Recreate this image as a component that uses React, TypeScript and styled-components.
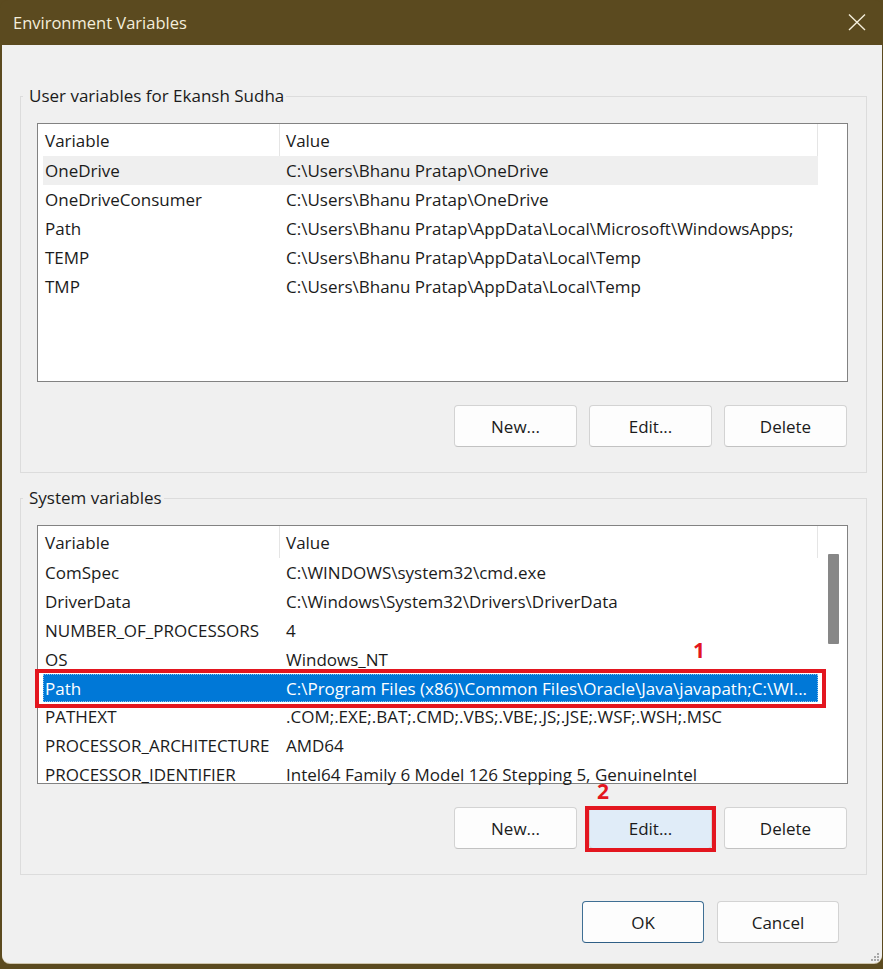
import React from "react";
import styled, { createGlobalStyle } from "styled-components";

const GlobalStyle = createGlobalStyle`
  html, body {
    margin: 0;
    padding: 0;
    background: #5b4a1f;
  }
  body {
    font-family: "Open Sans", "Noto Sans", "Liberation Sans", sans-serif;
    font-size: 17px;
    color: #1b1b1b;
  }
  * { box-sizing: border-box; }
`;

const Window = styled.div`
  width: 883px;
  height: 969px;
  display: flex;
  flex-direction: column;
  background: #5b4a1f;
  border-radius: 8px 8px 0 0;
  overflow: hidden;
`;

const TitleBar = styled.div`
  height: 45px;
  flex: none;
  display: flex;
  align-items: center;
  justify-content: space-between;
  padding: 0 16px 0 13px;
  color: #f4eedb;
  font-size: 16.5px;
`;

const CloseButton = styled.button`
  border: 0;
  background: transparent;
  padding: 0;
  width: 20px;
  height: 20px;
  display: flex;
  align-items: center;
  justify-content: center;
  color: #f4eedb;
`;

const Body = styled.div`
  position: relative;
  flex: 1;
  margin: 0 1px 6px 2px;
  background: #f0f0f0;
  border-radius: 0 0 8px 8px;
  box-shadow: 0 1px 0 #cfc6ae;
  padding: 40px 15px 0 18px;
  display: flex;
  flex-direction: column;
`;

const Group = styled.fieldset<{ $gap?: number }>`
  margin: ${(p) => p.$gap ?? 0}px 0 0 0;
  padding: 0;
  border: 1px solid #dcdcdc;
  min-width: 0;
`;

const Legend = styled.legend`
  margin-left: 2px;
  padding: 0 2px 0 6px;
  line-height: 22px;
  font-size: 17px;
  color: #1b1b1b;
`;

const GroupInner = styled.div`
  padding: 16px 18px 25px 16px;
  display: flex;
  flex-direction: column;
`;

const ListBox = styled.div`
  height: 259px;
  border: 1px solid #828282;
  background: #fff;
  display: flex;
`;

const ListMain = styled.div`
  flex: 1;
  display: flex;
  flex-direction: column;
  min-width: 0;
`;

const HeaderRow = styled.div`
  height: 32px;
  flex: none;
  display: flex;
  padding-left: 5px;
`;

const HeaderCell = styled.div<{ $w: number; $pad: number }>`
  width: ${(p) => p.$w}px;
  flex: none;
  padding-left: ${(p) => p.$pad}px;
  display: flex;
  align-items: center;
  border-right: 1px solid #e5e5e5;
  background: #fff;
`;

const Rows = styled.div`
  flex: 1;
  clip-path: inset(0 -20px 0 -20px);
`;

const Row = styled.div<{ $state?: "hover" | "selected" }>`
  position: relative;
  height: 28.9px;
  margin-left: 5px;
  width: 775px;
  display: flex;
  align-items: center;
  white-space: nowrap;
  background: ${(p) =>
    p.$state === "selected" ? "#0078d7" : p.$state === "hover" ? "#efefef" : "transparent"};
  color: ${(p) => (p.$state === "selected" ? "#fff" : "#1b1b1b")};
  outline: ${(p) => (p.$state === "selected" ? "1px dotted rgba(255,255,255,0.55)" : "none")};
  outline-offset: -1px;
`;

const Cell = styled.div<{ $w: number; $pad: number }>`
  width: ${(p) => p.$w}px;
  flex: none;
  padding-left: ${(p) => p.$pad}px;
  overflow: hidden;
  white-space: nowrap;
`;

const Scrollbar = styled.div`
  width: 27px;
  flex: none;
  background: #fff;
  padding: 28px 0 0 8px;
`;

const Thumb = styled.div`
  width: 11px;
  height: 90px;
  background: #878787;
  border-radius: 1px;
`;

const RedFrame = styled.div<{ $t: number; $r: number; $b: number; $l: number }>`
  position: absolute;
  top: ${(p) => p.$t}px;
  right: ${(p) => p.$r}px;
  bottom: ${(p) => p.$b}px;
  left: ${(p) => p.$l}px;
  border: 4px solid #e3161f;
  pointer-events: none;
`;

const Marker = styled.span<{ $top: number; $left: number }>`
  position: absolute;
  top: ${(p) => p.$top}px;
  left: ${(p) => p.$left}px;
  color: #e3161f;
  font-family: "Open Sans", "Liberation Sans", sans-serif;
  font-weight: 700;
  font-size: 21px;
  line-height: 15px;
`;

const ButtonRow = styled.div<{ $top: number; $right?: number; $gap: number }>`
  display: flex;
  justify-content: flex-end;
  gap: ${(p) => p.$gap}px;
  margin-top: ${(p) => p.$top}px;
  padding-right: ${(p) => p.$right ?? 0}px;
`;

const Annotated = styled.span`
  position: relative;
  display: inline-flex;
`;

const Button = styled.button<{ $w?: number; $variant?: "default" | "active" | "primary" }>`
  width: ${(p) => p.$w ?? 123}px;
  height: 42px;
  border-radius: 4px;
  font-family: inherit;
  font-size: 17px;
  color: #1b1b1b;
  background: ${(p) => (p.$variant === "active" ? "#e0ecf8" : "#fdfdfd")};
  border: 1px solid ${(p) => (p.$variant === "primary" ? "#3f6f94" : "#d3d3d3")};
  border-bottom-color: ${(p) => (p.$variant === "primary" ? "#2f5f86" : "#c2c2c2")};
  padding: 0;
`;

const Grip = styled.svg`
  position: absolute;
  right: 2px;
  bottom: 1px;
`;

type Entry = [string, string];

const userVars: Entry[] = [
  ["OneDrive", "C:\\Users\\Bhanu Pratap\\OneDrive"],
  ["OneDriveConsumer", "C:\\Users\\Bhanu Pratap\\OneDrive"],
  ["Path", "C:\\Users\\Bhanu Pratap\\AppData\\Local\\Microsoft\\WindowsApps;"],
  ["TEMP", "C:\\Users\\Bhanu Pratap\\AppData\\Local\\Temp"],
  ["TMP", "C:\\Users\\Bhanu Pratap\\AppData\\Local\\Temp"],
];

const systemVars: Entry[] = [
  ["ComSpec", "C:\\WINDOWS\\system32\\cmd.exe"],
  ["DriverData", "C:\\Windows\\System32\\Drivers\\DriverData"],
  ["NUMBER_OF_PROCESSORS", "4"],
  ["OS", "Windows_NT"],
  ["Path", "C:\\Program Files (x86)\\Common Files\\Oracle\\Java\\javapath;C:\\WI..."],
  ["PATHEXT", ".COM;.EXE;.BAT;.CMD;.VBS;.VBE;.JS;.JSE;.WSF;.WSH;.MSC"],
  ["PROCESSOR_ARCHITECTURE", "AMD64"],
  ["PROCESSOR_IDENTIFIER", "Intel64 Family 6 Model 126 Stepping 5, GenuineIntel"],
];

function VarList({
  items,
  hover,
  selected,
  scroll,
}: {
  items: Entry[];
  hover?: number;
  selected?: number;
  scroll?: boolean;
}) {
  return (
    <ListBox>
      <ListMain>
        <HeaderRow>
          <HeaderCell $w={237} $pad={2}>Variable</HeaderCell>
          <HeaderCell $w={538} $pad={6}>Value</HeaderCell>
        </HeaderRow>
        <Rows>
          {items.map(([name, value], i) => (
            <Row
              key={name}
              $state={i === selected ? "selected" : i === hover ? "hover" : undefined}
            >
              <Cell $w={237} $pad={2}>{name}</Cell>
              <Cell $w={538} $pad={6}>{value}</Cell>
              {i === selected && (
                <>
                  <RedFrame $t={-5} $r={-8} $b={-6} $l={-8} />
                  <Marker $top={-31} $left={650}>1</Marker>
                </>
              )}
            </Row>
          ))}
        </Rows>
      </ListMain>
      {scroll && (
        <Scrollbar>
          <Thumb />
        </Scrollbar>
      )}
    </ListBox>
  );
}

export default function App() {
  return (
    <>
      <GlobalStyle />
      <Window>
        <TitleBar>
          <span>Environment Variables</span>
          <CloseButton aria-label="Close">
            <svg width="18" height="17" viewBox="0 0 18 17">
              <path d="M1 0.5 L17 16 M17 0.5 L1 16" stroke="#f4eedb" strokeWidth="1.4" fill="none" />
            </svg>
          </CloseButton>
        </TitleBar>
        <Body>
          <Group>
            <Legend>User variables for Ekansh Sudha</Legend>
            <GroupInner>
              <VarList items={userVars} hover={0} />
              <ButtonRow $top={23} $gap={12} $right={1}>
                <Button>New...</Button>
                <Button>Edit...</Button>
                <Button>Delete</Button>
              </ButtonRow>
            </GroupInner>
          </Group>

          <Group $gap={14}>
            <Legend>System variables</Legend>
            <GroupInner>
              <VarList items={systemVars} selected={4} scroll />
              <ButtonRow $top={23} $gap={12} $right={1}>
                <Button>New...</Button>
                <Annotated>
                  <Button $variant="active">Edit...</Button>
                  <RedFrame $t={-1} $r={-4} $b={-3} $l={-4} />
                  <Marker $top={-23} $left={8}>2</Marker>
                </Annotated>
                <Button>Delete</Button>
              </ButtonRow>
            </GroupInner>
          </Group>

          <ButtonRow $top={26} $gap={13} $right={28}>
            <Button $w={122} $variant="primary">OK</Button>
            <Button $w={122}>Cancel</Button>
          </ButtonRow>

          <Grip width="10" height="10" viewBox="0 0 10 10">
            {[
              [8, 2],
              [5, 5],
              [8, 5],
              [2, 8],
              [5, 8],
              [8, 8],
            ].map(([x, y]) => (
              <rect key={`${x}-${y}`} x={x - 1} y={y - 1} width="2" height="2" fill="#a8a8a8" />
            ))}
          </Grip>
        </Body>
      </Window>
    </>
  );
}
